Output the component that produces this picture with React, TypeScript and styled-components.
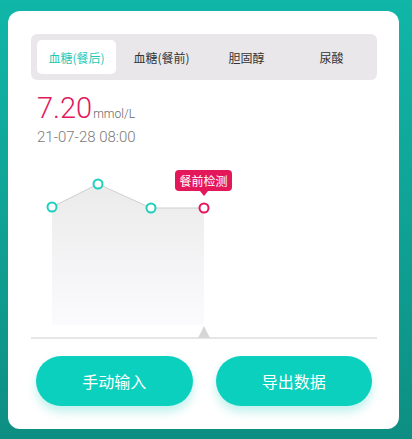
import React, { useState } from "react";
import styled, { createGlobalStyle } from "styled-components";

const GlobalStyle = createGlobalStyle`
  html, body { margin: 0; padding: 0; }
  body {
    width: 412px;
    height: 439px;
    overflow: hidden;
    background: linear-gradient(180deg, #10b6a8 0%, #0f9e91 60%, #0e8e83 100%);
    font-family: "Noto Sans CJK SC", "Noto Sans", sans-serif;
  }
`;

const Page = styled.div`
  box-sizing: border-box;
  width: 412px;
  height: 439px;
  padding: 11px 13px 10px 8px;
`;

const Card = styled.div`
  box-sizing: border-box;
  height: 418px;
  background: #ffffff;
  border-radius: 12px;
  padding: 23px 22px 23px 23px;
  display: flex;
  flex-direction: column;
`;

const Tabs = styled.div`
  display: flex;
  gap: 6px;
  height: 46px;
  box-sizing: border-box;
  padding: 6px;
  background: #e9e7ea;
  border-radius: 6px;
`;

const Tab = styled.button<{ $active: boolean }>`
  flex: 1;
  border: none;
  border-radius: 5px;
  background: ${(p) => (p.$active ? "#ffffff" : "transparent")};
  color: ${(p) => (p.$active ? "#1fc9b8" : "#333333")};
  font-family: "Noto Sans CJK SC", sans-serif;
  font-size: 12px;
  padding: 0;
  cursor: pointer;
`;

const Reading = styled.div`
  margin-top: 12px;
  display: flex;
  flex-direction: column;
  gap: 3px;
  padding-left: 6px;
`;

const ValueLine = styled.div`
  height: 32px;
  line-height: 32px;
  display: flex;
  align-items: baseline;
`;

const Value = styled.span`
  font-family: Roboto, "Noto Sans", sans-serif;
  font-size: 29px;
  font-weight: 300;
  color: #e4185c;
`;

const Unit = styled.span`
  font-family: Roboto, "Noto Sans", sans-serif;
  font-size: 12px;
  font-weight: 300;
  color: #666666;
  margin-left: 1px;
`;

const DateLine = styled.div`
  height: 20px;
  line-height: 20px;
  font-family: Roboto, "Noto Sans", sans-serif;
  font-size: 15px;
  font-weight: 300;
  color: #7a7a7a;
`;

const ChartWrap = styled.div`
  position: relative;
  margin-top: 3px;
  height: 190px;
`;

const Tooltip = styled.div`
  position: absolute;
  left: 144px;
  top: 20px;
  width: 57px;
  height: 21px;
  box-sizing: border-box;
  border-radius: 4px;
  background: #e5175b;
  color: #ffffff;
  font-size: 12px;
  line-height: 21px;
  text-align: center;
  &::after {
    content: "";
    position: absolute;
    left: 50%;
    bottom: -5px;
    margin-left: -4px;
    border-left: 4px solid transparent;
    border-right: 4px solid transparent;
    border-top: 5px solid #e5175b;
  }
`;

const Actions = styled.div`
  display: flex;
  gap: 23px;
  padding: 0 5px;
  margin-top: 16px;
`;

const ActionButton = styled.button`
  flex: 1;
  height: 50px;
  border: none;
  border-radius: 25px;
  background: #0bd0be;
  color: #ffffff;
  font-family: "Noto Sans CJK SC", sans-serif;
  font-size: 16px;
  box-shadow: 0 6px 10px rgba(11, 200, 184, 0.25);
  cursor: pointer;
`;

const tabs = ["血糖(餐后)", "血糖(餐前)", "胆固醇", "尿酸"];

const pts = [
  { x: 21, y: 57 },
  { x: 67, y: 34 },
  { x: 120, y: 58 },
  { x: 173, y: 58 },
];

function Chart() {
  const line = pts.map((p) => `${p.x},${p.y}`).join(" ");
  const area = `${pts[0].x},175 ${line} ${pts[pts.length - 1].x},175`;
  return (
    <svg width="346" height="190" viewBox="0 0 346 190">
      <defs>
        <linearGradient id="fill" x1="0" y1="0" x2="0" y2="1">
          <stop offset="0%" stopColor="#ebebeb" />
          <stop offset="100%" stopColor="#fbfafd" />
        </linearGradient>
      </defs>
      <polygon points={area} fill="url(#fill)" />
      <polyline points={line} fill="none" stroke="#cfcfcf" strokeWidth="1" />
      <line x1="0" y1="188" x2="346" y2="188" stroke="#dedede" strokeWidth="1.5" />
      <polygon points="173,176 167,188 179,188" fill="#d6d6d6" />
      {pts.map((p, i) => (
        <circle
          key={i}
          cx={p.x}
          cy={p.y}
          r="4.5"
          fill="#ffffff"
          stroke={i === pts.length - 1 ? "#e3175a" : "#1dcfbd"}
          strokeWidth="2"
        />
      ))}
    </svg>
  );
}

export default function App() {
  const [active, setActive] = useState(0);
  return (
    <>
      <GlobalStyle />
      <Page>
        <Card>
          <Tabs>
            {tabs.map((t, i) => (
              <Tab key={t} $active={i === active} onClick={() => setActive(i)}>
                {t}
              </Tab>
            ))}
          </Tabs>
          <Reading>
            <ValueLine>
              <Value>7.20</Value>
              <Unit>mmol/L</Unit>
            </ValueLine>
            <DateLine>21-07-28 08:00</DateLine>
          </Reading>
          <ChartWrap>
            <Chart />
            <Tooltip>餐前检测</Tooltip>
          </ChartWrap>
          <Actions>
            <ActionButton>手动输入</ActionButton>
            <ActionButton>导出数据</ActionButton>
          </Actions>
        </Card>
      </Page>
    </>
  );
}
